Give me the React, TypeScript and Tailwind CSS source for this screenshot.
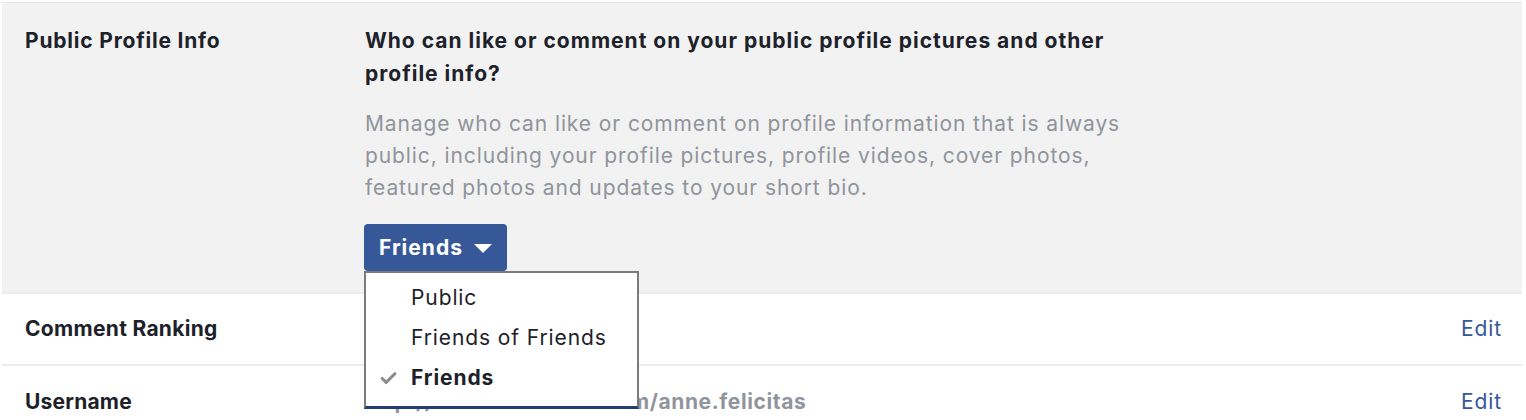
import { Check } from 'lucide-react';

const font = { fontFamily: 'Inter, "Liberation Sans", sans-serif' };

const PrivacyDropdown = () => (
  <div className="absolute left-0 top-[47px] z-10 w-[275px] border-x-2 border-t-2 border-b-[3px] border-x-[#7b7b7b] border-t-[#7b7b7b] border-b-[#233e6f] bg-white pt-[5px] pb-[8px]">
    {[
      { label: 'Public', selected: false },
      { label: 'Friends of Friends', selected: false },
      { label: 'Friends', selected: true },
    ].map((item) => (
      <div key={item.label} className="flex h-[40px] items-center">
        <div className="flex w-[45px] justify-end pr-[13px]">
          {item.selected && <Check size={19} strokeWidth={4} className="text-[#8c8c8c]" />}
        </div>
        <span className={`text-[21px] tracking-[0.9px] text-[#1d2129] ${item.selected ? 'font-bold' : 'font-normal'}`}>
          {item.label}
        </span>
      </div>
    ))}
  </div>
);

export default function App() {
  return (
    <div className="w-[1526px] h-[420px] overflow-hidden bg-white pt-[2px] tracking-[0.9px]" style={font}>
      {/* Public Profile Info */}
      <div className="mx-[2px] mr-[4px] border-t border-[#e3e4e8] border-b-2 border-b-[#e9ebee] bg-[#f2f2f2] pt-[21px] pb-[21px]">
        <div className="flex">
          <div className="w-[363px] pl-[23px] text-[21px] leading-[33px] font-bold tracking-[0.8px] text-[#1d2129]">
            Public Profile Info
          </div>
          <div className="w-[770px]">
            <h3 className="text-[21px] leading-[33px] font-bold tracking-[1px] text-[#1d2129]">
              Who can like or comment on your public profile pictures and other profile info?
            </h3>
            <p className="mt-[18px] text-[21px] leading-[32px] text-[#90949c]">
              Manage who can like or comment on profile information that is always public, including your profile pictures, profile videos, cover photos, featured photos and updates to your short bio.
            </p>
            <div className="relative mt-[20px] -ml-px">
              <button className="flex h-[47px] items-center gap-[11px] rounded-[4px] bg-[#365899] pl-[15px] pr-[15px] text-[21px] font-bold tracking-[1px] text-white">
                Friends
                <svg width="18" height="9" viewBox="0 0 18 9" className="mt-[1px]">
                  <path d="M0 0 H18 L9 9 Z" fill="white" />
                </svg>
              </button>
              <PrivacyDropdown />
            </div>
          </div>
        </div>
      </div>

      {/* Comment Ranking */}
      <div className="mx-[2px] mr-[4px] flex h-[72px] items-center border-b-2 border-[#e9ebee] pl-[23px] pr-[20px]">
        <div className="flex-1 text-[21px] font-bold tracking-[0.3px] text-[#1d2129]">Comment Ranking</div>
        <a className="text-[21px] text-[#365899]">Edit</a>
      </div>

      {/* Username */}
      <div className="mx-[2px] mr-[4px] flex h-[72px] items-center pl-[23px] pr-[20px]">
        <div className="w-[340px] text-[21px] font-bold tracking-[0.2px] text-[#1d2129]">Username</div>
        <div className="flex-1 text-[21px] font-bold tracking-[0.6px] text-[#90949c]">http://www.facebook.com/anne.felicitas</div>
        <a className="text-[21px] text-[#365899]">Edit</a>
      </div>
    </div>
  );
}
